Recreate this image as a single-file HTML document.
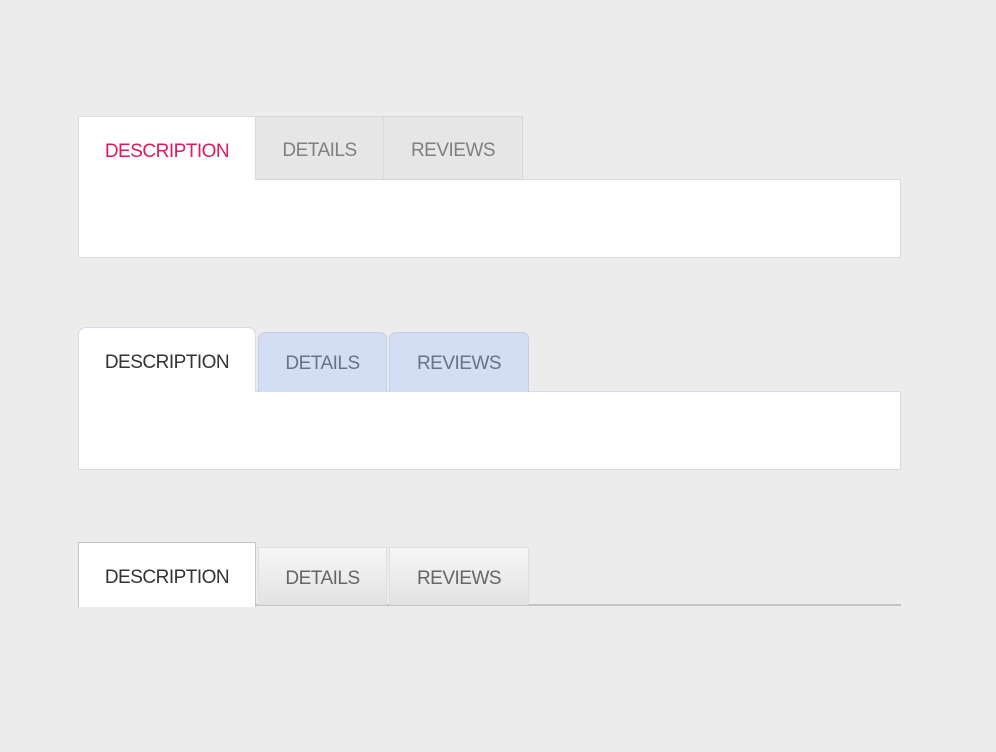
<!DOCTYPE html>
<html><head><style>
body{margin:0;width:996px;height:752px;background:#ececec;position:relative;overflow:hidden;font-family:"Liberation Sans",sans-serif}
.a{position:absolute;box-sizing:border-box;display:flex;align-items:center;justify-content:center;font-size:19px;letter-spacing:-0.5px;padding-top:6px}
</style></head><body>
<!-- set 1 -->
<div class="a" style="left:78px;top:179px;width:823px;height:79px;background:#fff;border:1px solid #dcdcdc"></div>
<div class="a" style="left:78px;top:116px;width:178px;height:64px;background:#fff;border:1px solid #dcdcdc;border-bottom:none;color:#e0195a">DESCRIPTION</div>
<div class="a" style="left:255px;top:116px;width:129px;height:64px;background:#e6e6e6;border:1px solid #d8d8d8;color:#808080">DETAILS</div>
<div class="a" style="left:383px;top:116px;width:140px;height:64px;background:#e6e6e6;border:1px solid #d8d8d8;color:#808080">REVIEWS</div>
<!-- set 2 -->
<div class="a" style="left:78px;top:391px;width:823px;height:79px;background:#fff;border:1px solid #d4dce8"></div>
<div class="a" style="left:78px;top:327px;width:178px;height:65px;background:#fff;border:1px solid #d4dce8;border-bottom:none;border-radius:8px 8px 0 0;color:#333">DESCRIPTION</div>
<div class="a" style="left:258px;top:332px;width:129px;height:60px;background:#d3ddf4;border:1px solid #c4cfe6;border-bottom:none;border-radius:7px 7px 0 0;color:#6b7285;padding-top:2px">DETAILS</div>
<div class="a" style="left:389px;top:332px;width:140px;height:60px;background:#d3ddf4;border:1px solid #c4cfe6;border-bottom:none;border-radius:7px 7px 0 0;color:#6b7285;padding-top:2px">REVIEWS</div>
<!-- set 3 -->
<div style="position:absolute;left:78px;top:604px;width:823px;height:2px;background:#c4c4c4"></div>
<div class="a" style="left:78px;top:542px;width:178px;height:65px;background:#fff;border:1px solid #c4c4c4;border-bottom:none;color:#333">DESCRIPTION</div>
<div class="a" style="left:258px;top:547px;width:129px;height:58px;background:linear-gradient(#f6f6f6,#e2e2e2);border:1px solid #dedede;border-bottom:none;color:#666;padding-top:4px">DETAILS</div>
<div class="a" style="left:389px;top:547px;width:140px;height:58px;background:linear-gradient(#f6f6f6,#e2e2e2);border:1px solid #dedede;border-bottom:none;color:#666;padding-top:4px">REVIEWS</div>
</body></html>
